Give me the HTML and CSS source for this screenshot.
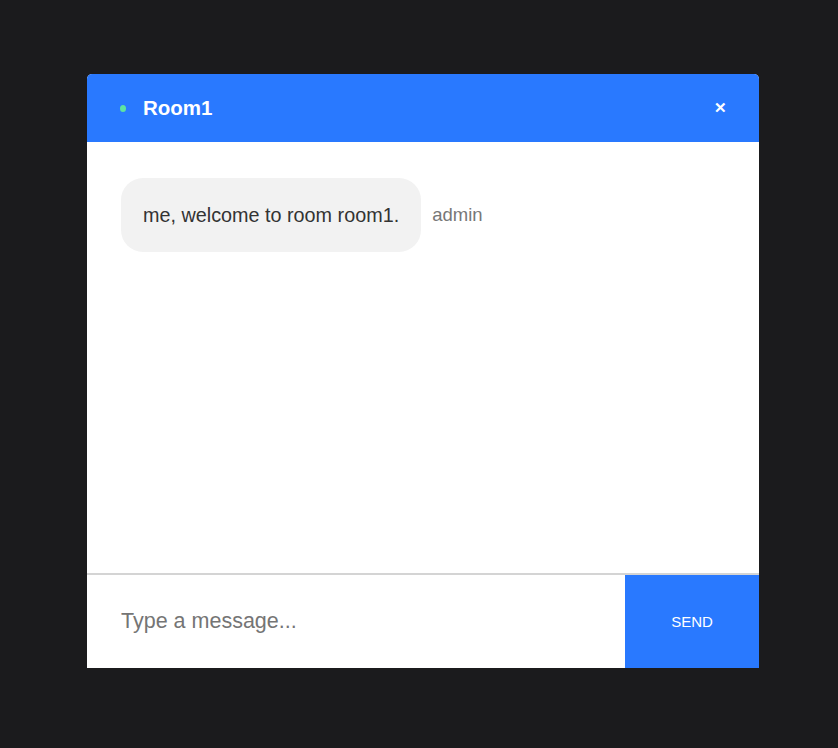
FILE: index.html
```html
<!DOCTYPE html>
<html>
<head>
<meta charset="utf-8">
<link rel="stylesheet" href="styles.css">
</head>
<body>
<div class="stage">
  <div class="chat">
    <div class="header">
      <div class="title"><span class="dot"></span><span class="name">Room1</span></div>
      <span class="close">✕</span>
    </div>
    <div class="messages">
      <div class="msg">
        <div class="bubble">me, welcome to room room1.</div>
        <span class="author">admin</span>
      </div>
    </div>
    <div class="footer">
      <input class="input" type="text" placeholder="Type a message...">
      <button class="send">SEND</button>
    </div>
  </div>
</div>
</body>
</html>
```
FILE: styles.css
```css
html, body { margin: 0; padding: 0; }
body {
  background: #1b1b1d;
  font-family: "Liberation Sans", Arial, sans-serif;
  width: 838px;
  height: 748px;
  overflow: hidden;
}
.stage {
  padding-top: 74px;
  padding-left: 87px;
}
.chat {
  width: 672px;
  height: 594px;
  background: #fff;
  border-radius: 5px 5px 0 0;
  display: flex;
  flex-direction: column;
  overflow: hidden;
}
.header {
  height: 68px;
  background: #2979ff;
  display: flex;
  align-items: center;
  justify-content: space-between;
  padding: 0 32px 0 33px;
  color: #fff;
  flex-shrink: 0;
}
.title { display: flex; align-items: center; }
.dot {
  width: 6px; height: 7px;
  border-radius: 50%;
  background: #5ee3a1;
  margin-right: 17px;
}
.name { font-size: 20.5px; font-weight: bold; }
.close { font-size: 15px; font-weight: bold; }
.messages {
  flex: 1;
  padding: 36px 34px;
}
.msg { display: flex; align-items: center; }
.bubble {
  background: #f2f2f2;
  border-radius: 22px;
  padding: 26px 22px;
  font-size: 19.8px;
  line-height: 22px;
  color: #333;
}
.author {
  margin-left: 11px;
  font-size: 18.5px;
  color: #777;
}
.footer {
  height: 93px;
  border-top: 2px solid #d4d4d4;
  display: flex;
  flex-shrink: 0;
}
.input {
  flex: 1;
  border: none;
  outline: none;
  padding: 0 0 0 34px;
  font-family: "Liberation Sans", Arial, sans-serif;
  font-size: 21.5px;
  color: #333;
  background: #fff;
}
.input::placeholder { color: #757575; }
.send {
  width: 134px;
  border: none;
  background: #2979ff;
  color: #fff;
  font-family: "Liberation Sans", Arial, sans-serif;
  font-size: 15px;
}
```
